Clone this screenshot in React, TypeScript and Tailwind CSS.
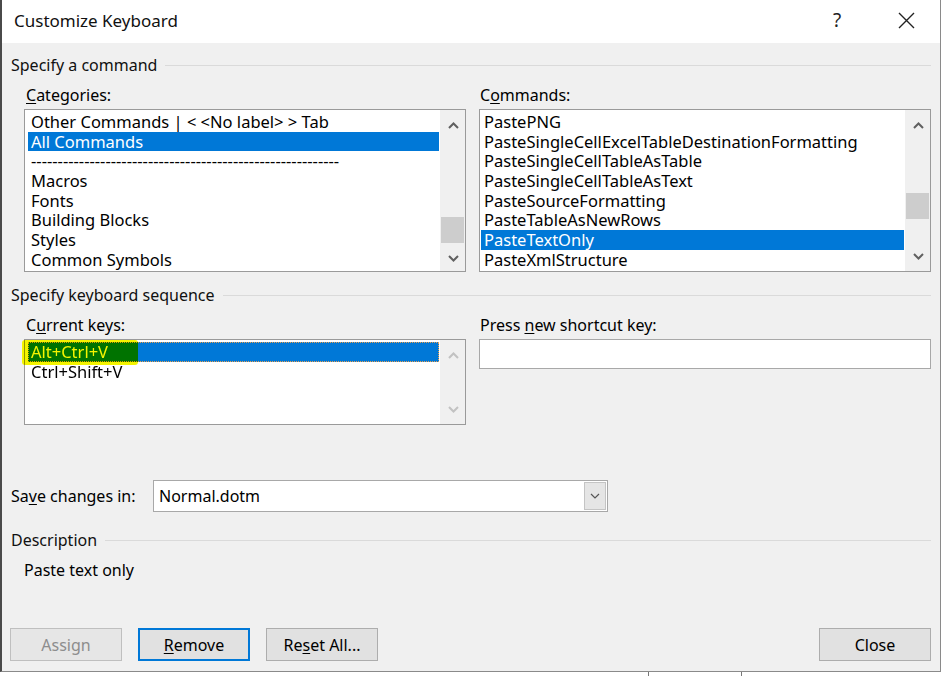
import React from "react";

const CMDS = [
  "PastePNG",
  "PasteSingleCellExcelTableDestinationFormatting",
  "PasteSingleCellTableAsTable",
  "PasteSingleCellTableAsText",
  "PasteSourceFormatting",
  "PasteTableAsNewRows",
  "PasteTextOnly",
  "PasteXmlStructure",
];

const CATS = [
  "Other Commands | < <No label> > Tab",
  "All Commands",
  "----------------------------------------------------------",
  "Macros",
  "Fonts",
  "Building Blocks",
  "Styles",
  "Common Symbols",
];

function Chevron({ up, disabled }: { up?: boolean; disabled?: boolean }) {
  return (
    <svg width="11" height="7" viewBox="0 0 11 7" className="block">
      <polyline
        points={up ? "1,6 5.5,1.5 10,6" : "1,1 5.5,5.5 10,1"}
        fill="none"
        stroke={disabled ? "#c2c2c2" : "#606060"}
        strokeWidth="2"
      />
    </svg>
  );
}

function Scrollbar({ thumbTop, disabled }: { thumbTop?: number; disabled?: boolean }) {
  return (
    <div className="flex w-[25px] shrink-0 flex-col bg-[#f0f0f0]">
      <div className="flex h-[30px] shrink-0 items-center justify-center pl-[1px]">
        <Chevron up disabled={disabled} />
      </div>
      <div className="flex-1 pl-[1px]">
        {thumbTop !== undefined && (
          <div className="h-[26px] w-[23px] bg-[#cdcdcd]" style={{ marginTop: thumbTop }} />
        )}
      </div>
      <div className="flex h-[30px] shrink-0 items-center justify-center pl-[1px]">
        <Chevron disabled={disabled} />
      </div>
    </div>
  );
}

function Row({ text, selected }: { text: string; selected?: boolean }) {
  return (
    <div
      className={
        selected
          ? "h-[19.7px] whitespace-nowrap bg-[#0078d7] pl-[3px] leading-[19.7px] text-white"
          : "h-[19.7px] whitespace-nowrap pl-[3px] leading-[19.7px] text-black"
      }
    >
      {text}
    </div>
  );
}

function Heading({ text }: { text: string }) {
  return (
    <div className="flex h-[20px] items-center">
      <span className="leading-[20px] text-[#111]">{text}</span>
      <div className="ml-[8px] h-px flex-1 bg-[#dadada]" />
    </div>
  );
}

function Button({
  children,
  disabled,
  focused,
}: {
  children: React.ReactNode;
  disabled?: boolean;
  focused?: boolean;
}) {
  if (disabled)
    return (
      <div className="flex h-[33px] w-[112px] items-center justify-center border border-[#bfbfbf] bg-[#e6e6e6] text-[#8d8d8d]">
        {children}
      </div>
    );
  if (focused)
    return (
      <div className="flex h-[33px] w-[112px] items-center justify-center border-2 border-[#0078d7] bg-[#e1e1e1] text-black">
        {children}
      </div>
    );
  return (
    <div className="flex h-[33px] w-[112px] items-center justify-center border border-[#adadad] bg-[#e1e1e1] text-black">
      {children}
    </div>
  );
}

export default function App() {
  return (
    <div className="flex h-[676px] w-[945px] flex-col overflow-hidden bg-white font-['Noto_Sans',sans-serif] text-[16px] text-black">
      <div className="flex h-[672px] w-[941px] shrink-0 flex-col border-b border-l-2 border-r border-b-[#8a8a8a] border-l-[#4a4a4a] border-r-[#8a8a8a]">
        {/* Title bar */}
        <div className="flex h-[43px] shrink-0 items-center bg-white pb-[2px] pl-[12px] pr-[11px]">
          <span className="text-[17px] text-[#111]">Customize Keyboard</span>
          <div className="ml-auto flex items-center">
            <span className="w-[20px] text-center text-[19px] text-[#222]">?</span>
            <div className="ml-[36px] flex w-[46px] items-center justify-center">
              <svg width="17" height="17" viewBox="0 0 17 17">
                <path d="M1 1 L16 16 M16 1 L1 16" stroke="#222" strokeWidth="1.4" fill="none" />
              </svg>
            </div>
          </div>
        </div>

        {/* Body */}
        <div className="flex flex-1 flex-col bg-[#f0f0f0] pl-[9px] pr-[9px] pt-[12px]">
          <Heading text="Specify a command" />

          <div className="ml-[13px] mt-[10px] flex h-[20px] items-center leading-[20px]">
            <div className="w-[455px] pl-[2px]">
              <span className="underline underline-offset-2">C</span>ategories:
            </div>
            <div className="pl-[1px]">
              C<span className="underline underline-offset-2">o</span>mmands:
            </div>
          </div>

          <div className="ml-[13px] mt-[4px] flex gap-[13px] text-[16.5px]">
            <div className="flex h-[163px] w-[442px] border border-[#9a9a9a] bg-white">
              <div className="flex-1 overflow-hidden pl-[3px] pr-[1px] pt-[2px]">
                {CATS.map((c, i) => (
                  <Row key={i} text={c} selected={i === 1} />
                ))}
              </div>
              <Scrollbar thumbTop={77} />
            </div>
            <div className="flex h-[163px] w-[452px] border border-[#9a9a9a] bg-white">
              <div className="flex-1 overflow-hidden pl-[1px] pr-[1px] pt-[2px]">
                {CMDS.map((c, i) => (
                  <Row key={i} text={c} selected={i === 6} />
                ))}
              </div>
              <Scrollbar thumbTop={53} />
            </div>
          </div>

          <div className="mt-[13px]">
            <Heading text="Specify keyboard sequence" />
          </div>

          <div className="ml-[13px] mt-[10px] flex h-[20px] items-center leading-[20px]">
            <div className="w-[455px] pl-[2px]">
              C<span className="underline underline-offset-2">u</span>rrent keys:
            </div>
            <div className="pl-[1px]">
              Press <span className="underline underline-offset-2">n</span>ew shortcut key:
            </div>
          </div>

          <div className="ml-[13px] mt-[4px] flex items-start gap-[13px] text-[16.5px]">
            <div className="relative isolate flex h-[86px] w-[442px] border border-[#9a9a9a] bg-white">
              <div className="flex-1 overflow-hidden pl-[3px] pr-[1px] pt-[2px]">
                <div className="h-[19.7px] whitespace-nowrap bg-[#0078d7] pl-[3px] leading-[19.7px] text-white outline-1 -outline-offset-1 outline-dotted outline-[#e8a050]">
                  Alt+Ctrl+V
                </div>
                <Row text="Ctrl+Shift+V" />
              </div>
              <Scrollbar disabled />
              <div className="pointer-events-none absolute left-[-3px] top-[0px] h-[25px] w-[116px] rounded-[3px] bg-[#f4f400] mix-blend-multiply" />
            </div>
            <div className="h-[30px] w-[452px] border border-[#a8a8a8] bg-white" />
          </div>

          <div className="mt-[55px] flex h-[32px] items-center">
            <div className="w-[142px]">
              Sa<span className="underline underline-offset-2">v</span>e changes in:
            </div>
            <div className="flex h-[32px] w-[455px] items-stretch border border-[#a8a8a8] bg-white">
              <div className="flex flex-1 items-center pl-[5px]">Normal.dotm</div>
              <div className="my-px mr-px flex w-[22px] items-center justify-center border border-[#c4c4c4] bg-[#e5e5e5]">
                <svg width="10" height="6" viewBox="0 0 10 6">
                  <polyline points="1,1 5,5 9,1" fill="none" stroke="#555" strokeWidth="1.2" />
                </svg>
              </div>
            </div>
          </div>

          <div className="mt-[18px]">
            <Heading text="Description" />
          </div>

          <div className="ml-[13px] mt-[10px] h-[20px] leading-[20px]">Paste text only</div>

          <div className="-ml-px mt-[48px] flex items-center">
            <Button disabled>Assign</Button>
            <div className="ml-[16px]">
              <Button focused>
                <span>
                  <span className="underline underline-offset-2">R</span>emove
                </span>
              </Button>
            </div>
            <div className="ml-[16px]">
              <Button>
                <span>
                  Re<span className="underline underline-offset-2">s</span>et All...
                </span>
              </Button>
            </div>
            <div className="ml-auto">
              <Button>Close</Button>
            </div>
          </div>
        </div>
      </div>
      <div className="h-[4px] overflow-hidden bg-white">
        <div className="ml-[648px] h-[4px] w-[94px] border-x border-[#777]" />
      </div>
    </div>
  );
}
